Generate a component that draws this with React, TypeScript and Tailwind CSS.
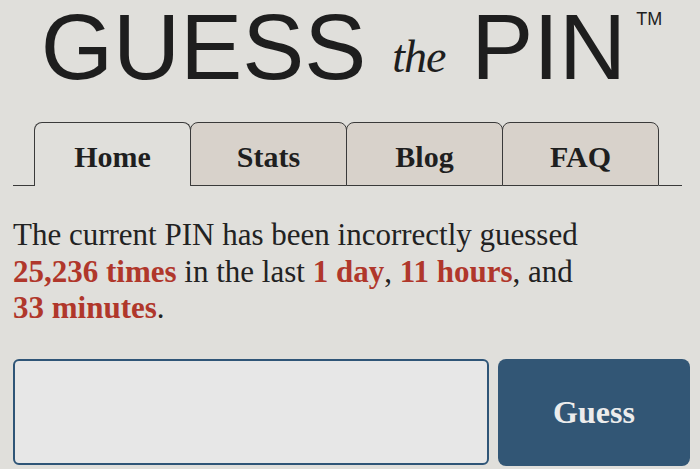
export default function App() {
  const tabs = ['Home', 'Stats', 'Blog', 'FAQ']

  return (
    <div className="min-h-screen overflow-hidden bg-[#e0dfdb] pl-[13px] pr-[10px] text-[#222]">
      {/* Title */}
      <h1 className="-mt-[5px] text-center text-[93px] leading-[104px] font-normal text-[#1e1e1e] whitespace-nowrap font-['Liberation_Sans',Arial,sans-serif]">
        GUESS{' '}
        <span className="italic text-[46px] leading-none tracking-[-1px] align-[7px] font-['Liberation_Serif',serif]">the</span>{' '}
        PIN
        <span className="text-[18px] leading-none align-[54px] ml-[10px]">TM</span>
      </h1>

      {/* Tabs */}
      <nav className="mt-[23px] flex w-[669px] items-end font-['Liberation_Serif',serif] font-bold text-[30px] text-[#1f1f1f]">
        <div className="w-[21px] border-b border-[#3a3a3a]" />
        {tabs.map((t, i) => (
          <div
            key={t}
            className={
              i === 0
                ? 'flex h-[64px] w-[157px] items-center justify-center rounded-t-[8px] border border-b-0 border-[#3a3a3a] bg-[#e0dfdb] pt-[4px]'
                : 'flex h-[64px] w-[157px] -ml-px items-center justify-center rounded-t-[8px] border border-[#3a3a3a] bg-[#d8d2cb] pt-[4px]'
            }
          >
            {t}
          </div>
        ))}
        <div className="flex-1 border-b border-[#3a3a3a]" />
      </nav>

      {/* Counter */}
      <p className="mt-[31px] text-[31px] leading-[36.5px] font-['Liberation_Serif',serif] text-[#222]">
        The current PIN has been incorrectly guessed
        <br />
        <b className="text-[#b0372b]">25,236 times</b> in the last <b className="text-[#b0372b]">1 day</b>,{' '}
        <b className="text-[#b0372b]">11 hours</b>, and
        <br />
        <b className="text-[#b0372b]">33 minutes</b>.
      </p>

      {/* Guess form */}
      <div className="mt-[32px] flex gap-[9px]">
        <input
          type="text"
          className="h-[106px] w-[476px] rounded-[6px] border-2 border-[#2f5577] bg-[#e7e7e7] outline-none"
        />
        <button className="h-[107px] w-[192px] rounded-[8px] bg-[#325675] text-[32px] font-bold text-[#ececec] font-['Liberation_Serif',serif]">
          Guess
        </button>
      </div>
    </div>
  )
}
